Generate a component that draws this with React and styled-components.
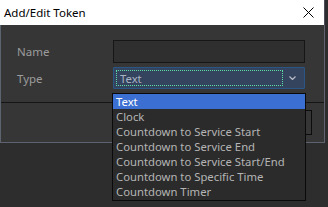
import React from "react";
import styled, { createGlobalStyle } from "styled-components";

const Global = createGlobalStyle`
  html, body { margin: 0; padding: 0; }
  body {
    width: 328px;
    height: 207px;
    overflow: hidden;
    background: #2d2d2d;
    font-family: "Noto Sans", "Open Sans", sans-serif;
    font-size: 11.3px;
  }
`;

const Screen = styled.div`
  position: relative;
  width: 328px;
  height: 207px;
`;

const Window = styled.div`
  width: 325px;
  display: flex;
  flex-direction: column;
`;

const TitleBar = styled.div`
  height: 25px;
  background: #ffffff;
  display: flex;
  align-items: center;
  justify-content: space-between;
  padding: 0 10px 0 4px;
  box-sizing: border-box;
  border-right: 1px solid #4a4f57;
`;

const Title = styled.span`
  color: #000;
  font-size: 11.5px;
  line-height: 1;
`;

const CloseBtn = styled.svg`
  display: block;
`;

const Body = styled.div`
  background: #363636;
  border: 1px solid #5d6470;
  border-top: none;
  height: 117px;
  display: flex;
  flex-direction: column;
`;

const Form = styled.div`
  display: grid;
  grid-template-columns: 96px 192px;
  grid-template-rows: 23px 22px;
  row-gap: 4px;
  padding: 15px 0 0 16px;
  align-items: center;
  height: 77px;
  box-sizing: border-box;
`;

const Label = styled.span`
  color: #9c9c9c;
  font-size: 11.5px;
`;

const TextInput = styled.div`
  height: 23px;
  box-sizing: border-box;
  background: #2f2f2f;
  border: 1px solid #161616;
`;

const Select = styled.div`
  height: 22px;
  box-sizing: border-box;
  background: #34445e;
  border: 1px solid #2a5686;
  border-radius: 1px;
  display: flex;
  align-items: center;
  padding: 2px;
`;

const Focus = styled.div`
  flex: 1;
  height: 16px;
  box-sizing: border-box;
  border: 1px dotted #5fe0a6;
  color: #aab3c2;
  display: flex;
  align-items: center;
  padding-left: 3px;
  font-size: 11.3px;
`;

const Arrow = styled.div`
  width: 19px;
  display: flex;
  justify-content: center;
  align-items: center;
`;

const Separator = styled.div`
  height: 1px;
  background: #151515;
`;

const Buttons = styled.div`
  display: flex;
  justify-content: flex-end;
  gap: 8px;
  padding: 7px 12px 0 0;
`;

const Button = styled.div`
  width: 75px;
  height: 25px;
  box-sizing: border-box;
  border: 1px solid #0c0c0c;
  background: #363636;
`;

const List = styled.div`
  position: absolute;
  left: 112px;
  top: 93px;
  width: 194px;
  height: 108px;
  box-sizing: border-box;
  background: #2b2b2b;
  border: 1px solid #0a0a0a;
  display: flex;
  flex-direction: column;
`;

const Item = styled.div`
  height: 15px;
  line-height: 15px;
  padding-left: 3px;
  font-size: 11.3px;
  white-space: nowrap;
  color: ${(p) => (p.$selected ? "#ffffff" : "#b4b4b4")};
  background: ${(p) => (p.$selected ? "#3b6fd1" : "transparent")};
`;

const items = [
  "Text",
  "Clock",
  "Countdown to Service Start",
  "Countdown to Service End",
  "Countdown to Service Start/End",
  "Countdown to Specific Time",
  "Countdown Timer",
];

export default function App() {
  return (
    <Screen>
      <Global />
      <Window>
        <TitleBar>
          <Title>Add/Edit Token</Title>
          <CloseBtn width="11" height="11" viewBox="0 0 11 11">
            <path d="M0.5 0.5 L10.5 10.5 M10.5 0.5 L0.5 10.5" stroke="#000" strokeWidth="1" fill="none" />
          </CloseBtn>
        </TitleBar>
        <Body>
          <Form>
            <Label>Name</Label>
            <TextInput />
            <Label>Type</Label>
            <Select>
              <Focus>Text</Focus>
              <Arrow>
                <svg width="7" height="4" viewBox="0 0 7 4">
                  <path d="M0.5 0.5 L3.5 3.5 L6.5 0.5" stroke="#b8bcc6" strokeWidth="1.2" fill="none" />
                </svg>
              </Arrow>
            </Select>
          </Form>
          <Separator />
          <Buttons>
            <Button />
            <Button />
          </Buttons>
        </Body>
      </Window>
      <List>
        {items.map((t, i) => (
          <Item key={t} $selected={i === 0}>
            {t}
          </Item>
        ))}
      </List>
    </Screen>
  );
}
